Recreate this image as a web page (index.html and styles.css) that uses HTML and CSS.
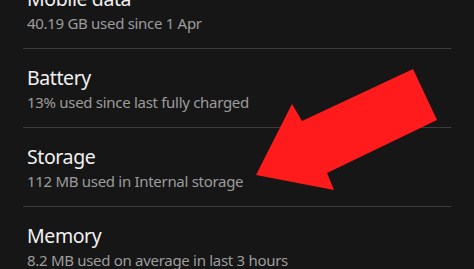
FILE: index.html
```html
<!DOCTYPE html>
<html lang="en">
<head>
    <meta charset="UTF-8">
    <meta name="viewport" content="width=device-width, initial-scale=1.0">
    <title>Device care</title>
    <link rel="stylesheet" href="styles.css">
</head>
<body>
    <div class="screen">
        <ul class="settings-list">
            <li class="setting">
                <div class="setting-title">Mobile data</div>
                <div class="setting-summary">40.19 GB used since 1 Apr</div>
            </li>
            <li class="setting">
                <div class="setting-title">Battery</div>
                <div class="setting-summary">13% used since last fully charged</div>
            </li>
            <li class="setting">
                <div class="setting-title">Storage</div>
                <div class="setting-summary">112 MB used in Internal storage</div>
            </li>
            <li class="setting">
                <div class="setting-title">Memory</div>
                <div class="setting-summary">8.2 MB used on average in last 3 hours</div>
            </li>
        </ul>

        <!-- red pointer drawn on top of the screenshot -->
        <svg class="pointer" width="474" height="269" viewBox="0 0 474 269">
            <polygon points="256,175 292,104 302,121 413,69 437,120 327,173 334,190" fill="#ff1b1b"/>
        </svg>
    </div>
</body>
</html>
```

FILE: styles.css
```css
body, html {
    margin: 0;
    padding: 0;
    width: 100%;
    height: 100%;
    overflow: hidden;
    background-color: #161616;
    font-family: "Noto Sans", "Open Sans", sans-serif;
}

.screen {
    position: relative;
    width: 100%;
    height: 100%;
    overflow: hidden;
}

.settings-list {
    list-style: none;
    margin: -30px 0 0 23px;
    padding: 0;
    width: 428px;
}

.setting {
    padding: 17px 0 15px 4px;
    border-bottom: 1px solid #3d3d3d;
}

.setting-title {
    font-size: 19.5px;
    line-height: 24px;
    letter-spacing: -0.4px;
    color: #f1f1f1;
}

.setting-summary {
    margin-top: 2px;
    font-size: 15px;
    line-height: 20px;
    letter-spacing: -0.3px;
    color: #9c9c9c;
}

.pointer {
    position: absolute;
    top: 0;
    left: 0;
}
```
